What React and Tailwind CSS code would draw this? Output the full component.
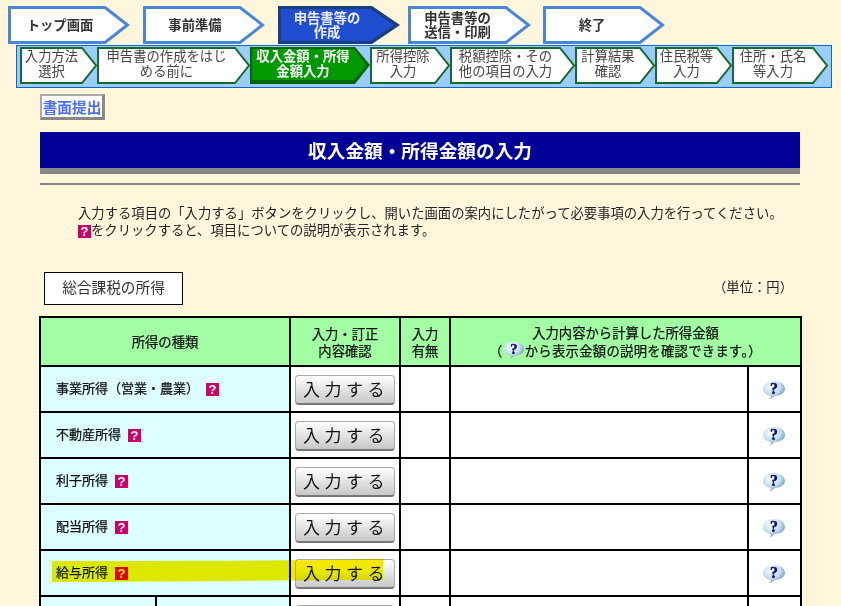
const FONT = '"Noto Sans CJK JP", "Liberation Sans", sans-serif';
const SEMI = '[-webkit-text-stroke:0.25px_#111]';

function TopStep({ lines, width, active, ml = '', pad = 'pr-[18px]' }) {
  const w = width, h = 38;
  return (
    <div className={`relative shrink-0 h-[38px] flex items-center justify-center ${ml}`} style={{ width: w }}>
      <svg className="absolute inset-0 overflow-visible" width={w} height={h} viewBox={`0 0 ${w} ${h}`}>
        {active ? (
          <>
            <polygon points={`0,0 ${w - 28},0 ${w},19 ${w - 28},38 0,38`} fill="#1a3f7f" />
            <polygon points={`3,3 ${w - 30},3 ${w - 6},19 ${w - 30},35 3,35`} fill="#1f4fd0" />
          </>
        ) : (
          <polygon points={`1.5,1.5 ${w - 25},1.5 ${w - 2.5},19 ${w - 25},36.5 1.5,36.5`} fill="#fff" stroke="#4a86d8" strokeWidth="3" />
        )}
      </svg>
      <span className={`relative text-center text-[13.33px] leading-[14px] font-bold ${pad} ${active ? 'text-[#eef]' : 'text-[#333]'}`}>
        {lines.map((l) => <div key={l}>{l}</div>)}
      </span>
    </div>
  );
}

function SubStep({ lines, width, active }) {
  const w = width, h = 38;
  return (
    <div className="relative shrink-0 h-[38px] flex items-center justify-center" style={{ width: w }}>
      <svg className="absolute inset-0 overflow-visible" width={w} height={h} viewBox={`0 0 ${w} ${h}`}>
        {active ? (
          <>
            <polygon points={`0,0 ${w - 15},0 ${w},18 ${w - 15},37 0,37`} fill="#006600" />
            <polygon points={`2,2 ${w - 16},2 ${w - 4},18 ${w - 16},33 2,33`} fill="#009900" />
          </>
        ) : (
          <polygon points={`1,1 ${w - 15},1 ${w - 1},18.5 ${w - 15},36 1,36`} fill="#fff" stroke="#16692f" strokeWidth="2" />
        )}
      </svg>
      <span className={`relative text-center text-[13.33px] leading-[15px] pr-[14px] -mt-[6px] ${active ? 'text-white font-bold' : 'text-[#444]'}`}>
        {lines.map((l) => <div key={l} className="whitespace-nowrap">{l}</div>)}
      </span>
    </div>
  );
}

function Help({ hot, className = '' }) {
  return (
    <span className={`inline-flex items-center justify-center w-[13px] h-[13px] text-white text-[13px] leading-none font-bold align-[-1px] [-webkit-text-stroke:0px] font-['Liberation_Sans',sans-serif] ${hot ? 'bg-[#dd0000]' : 'bg-[#cc0066]'} ${className}`}>?</span>
  );
}

function Bubble({ size = 24 }) {
  return (
    <svg width={size} height={size * 0.83} viewBox="0 0 24 20">
      <defs>
        <radialGradient id="bub" cx="38%" cy="30%" r="75%">
          <stop offset="0%" stopColor="#ffffff" />
          <stop offset="55%" stopColor="#c5dff0" />
          <stop offset="100%" stopColor="#5f8ba3" />
        </radialGradient>
      </defs>
      <path d="M12 1 C18 1 23 4 23 9 C23 13 18 16 13 16 L8 19.5 L9 16 C4 15 1 13 1 9 C1 4 6 1 12 1 Z" fill="url(#bub)" />
      <text x="12" y="14" textAnchor="middle" fontSize="16" fontWeight="700" fontFamily="Liberation Serif, serif" fill="#10106e" stroke="#10106e" strokeWidth="0.5">?</text>
    </svg>
  );
}

function InputButton() {
  return (
    <button className="w-[100px] h-[30px] rounded-[4px] border border-[#aaa] border-b-2 border-b-[#777] bg-gradient-to-b from-white to-[#c8c8c8] text-[17px] leading-none tracking-[4.5px] text-[#111] flex items-center justify-center pl-[2px] pb-[2px]">
      入力する
    </button>
  );
}

const rows = [
  ['事業所得（営業・農業）'],
  ['不動産所得'],
  ['利子所得'],
  ['配当所得'],
  ['給与所得', true],
];

export default function App() {
  return (
    <div className="relative h-[606px] w-[841px] overflow-hidden bg-[#fff6dc] text-black" style={{ fontFamily: FONT }}>
      <div className="flex pt-[6px] pl-[8px] h-[44px]">
        <TopStep lines={['トップ画面']} width={122} />
        <TopStep lines={['事前準備']} width={122} ml="ml-[13px]" />
        <TopStep lines={['申告書等の', '作成']} width={122} active ml="ml-[13px]" pad="pr-6" />
        <TopStep lines={['申告書等の', '送信・印刷']} width={123} ml="ml-[8px]" pad="pr-6" />
        <TopStep lines={['終了']} width={122} ml="ml-[12px]" pad="pr-6" />
      </div>
      <div className="ml-[16px] mt-[1px] w-[816px] h-[43px] border border-[#0a64dc] bg-[#99ccff] flex pl-[3px] pt-[1px]">
        <SubStep lines={['入力方法', '選択']} width={77} />
        <SubStep lines={['申告書の作成をはじ', 'める前に']} width={153} />
        <SubStep lines={['収入金額・所得', '金額入力']} width={120} active />
        <SubStep lines={['所得控除', '入力']} width={80} />
        <SubStep lines={['税額控除・その', '他の項目の入力']} width={125} />
        <SubStep lines={['計算結果', '確認']} width={80} />
        <SubStep lines={['住民税等', '入力']} width={77} />
        <SubStep lines={['住所・氏名', '等入力']} width={96} />
      </div>
      <div className="ml-[40px] mt-[6px] w-[65px] h-[26px] border-2 border-t-[#aaa] border-l-[#aaa] border-r-[3px] border-b-[3px] border-r-[#888] border-b-[#888] bg-white text-[#4a70f5] text-[14.67px] font-bold flex items-center justify-center">
        書面提出
      </div>
      <div className="ml-[40px] mt-[12px] w-[760px]">
        <div className="h-[36px] bg-[#000099] border-b-[6px] border-[#888] box-content text-white text-[18.67px] font-bold flex items-center justify-center">
          収入金額・所得金額の入力
        </div>
        <div className="mt-[9px] h-[2px] bg-[#888]" />
      </div>
      <div className="ml-[78px] mt-[19px] text-[13.33px] leading-[17px] text-[#222] whitespace-nowrap">
        <div>入力する項目の「入力する」ボタンをクリックし、開いた画面の案内にしたがって必要事項の入力を行ってください。</div>
        <div><Help />をクリックすると、項目についての説明が表示されます。</div>
      </div>
      <div className="mt-[34px] ml-[44px] w-[749px] flex items-end justify-between">
        <div className="w-[139px] h-[33px] border border-black bg-white text-[14.67px] text-[#333] flex items-center justify-center pb-[4px]">総合課税の所得</div>
        <div className="text-[13.33px] text-[#222] pb-[8px]">（単位：円）</div>
      </div>
      <table className="mt-[11px] ml-[39px] w-[761px] table-fixed border-collapse border-2 border-black text-[13px]">
        <colgroup>
          <col className="w-[116px]" />
          <col className="w-[134px]" />
          <col className="w-[110px]" />
          <col className="w-[50px]" />
          <col className="w-[298px]" />
          <col className="w-[53px]" />
        </colgroup>
        <thead>
          <tr className={`h-[49px] bg-[#a3ffa3] text-[#111] text-center text-[13.33px] leading-[17px] ${SEMI}`}>
            <th colSpan={2} className="border-2 border-black font-normal">所得の種類</th>
            <th className="border-2 border-black font-normal">入力・訂正<br />内容確認</th>
            <th className="border-2 border-black font-normal">入力<br />有無</th>
            <th colSpan={2} className="border-2 border-black font-normal">
              入力内容から計算した所得金額<br />
              <span className="inline-flex items-center tracking-[0.3px]">（<Bubble size={22} />から表示金額の説明を確認できます。）</span>
            </th>
          </tr>
        </thead>
        <tbody>
          {rows.map(([name, hot]) => (
            <tr key={name} className="h-[46px]">
              <td colSpan={2} className={`border-2 border-black bg-[#ddffff] pl-[15px] pb-[3px] text-[#111] ${SEMI}`}>
                {name} <Help hot={hot} className="ml-[4px]" />
              </td>
              <td className="border-2 border-black bg-white pl-[4px] pt-[1px]"><InputButton /></td>
              <td className="border-2 border-black bg-white" />
              <td className="border-2 border-black bg-white" />
              <td className="border-2 border-black bg-white"><div className="flex justify-center pr-[2px] pt-[1px]"><Bubble /></div></td>
            </tr>
          ))}
          <tr className="h-[46px]">
            <td className="border-2 border-black bg-[#ddffff]" />
            <td className="border-2 border-black bg-[#ddffff]" />
            <td className="border-2 border-black bg-white pl-[4px] align-top pt-[8px]"><div className="h-[30px] rounded-[4px] border border-[#aaa] bg-white w-[100px]" /></td>
            <td className="border-2 border-black bg-white" />
            <td className="border-2 border-black bg-white" />
            <td className="border-2 border-black bg-white" />
          </tr>
        </tbody>
      </table>
      <svg className="absolute left-[52px] top-[558px] mix-blend-darken" width="335" height="26" viewBox="0 0 335 26">
        <path d="M0 3 C110 3 230 3 331 1 L331 22 C230 22 110 24 0 24 Z" fill="#f5e800" />
      </svg>
    </div>
  );
}
